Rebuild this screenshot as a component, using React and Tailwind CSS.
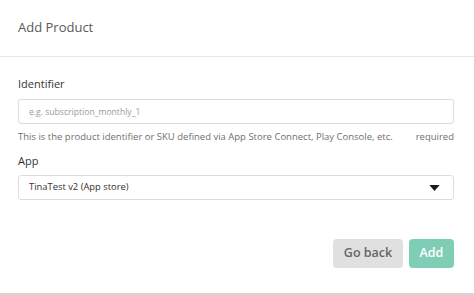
import React from "react";

export default function App() {
  return (
    <div
      className="flex h-[295px] w-[474px] flex-col bg-white"
      style={{ fontFamily: '"Open Sans", sans-serif' }}
    >
      <div className="flex h-[57px] items-center border-b border-[#e6e6e6] pl-[18px]">
        <h1 className="text-[13px] text-[#595959]">Add Product</h1>
      </div>

      <main className="flex flex-1 flex-col pl-[18px] pr-[20px] pt-[18px]">
        <label className="text-[11px] leading-[18px] text-[#333]">Identifier</label>
        <input
          type="text"
          placeholder="e.g. subscription_monthly_1"
          className="mt-[6px] h-[25px] w-full rounded-[3px] border border-[#dcdcdc] px-[10px] text-[8.6px] text-[#333] outline-none placeholder:text-[#9a9a9a]"
        />
        <div className="mt-[5px] flex justify-between whitespace-nowrap text-[9.5px] leading-[16px] text-[#6f6f6f]">
          <span>This is the product identifier or SKU defined via App Store Connect, Play Console, etc.</span>
          <span>required</span>
        </div>

        <label className="mt-[7px] text-[11px] leading-[18px] text-[#333]">App</label>
        <div className="mt-[5px] flex h-[25px] items-center justify-between rounded-[3px] border border-[#dcdcdc] pl-[10px] pr-[13px] text-[9.4px] text-[#333]">
          <span>TinaTest v2 (App store)</span>
          <svg width="11" height="6" viewBox="0 0 12 7">
            <path d="M0 0h12L6 7z" fill="#1a1a1a" />
          </svg>
        </div>

        <div className="mt-[39px] flex justify-end gap-[6px]">
          <button
            type="button"
            className="h-[29px] w-[70px] rounded-[4px] bg-[#e0e0e0] text-[12.5px] font-semibold text-[#666]"
          >
            Go back
          </button>
          <button
            type="button"
            className="h-[29px] w-[45px] rounded-[4px] bg-[#80cdb6] text-[12.5px] font-semibold text-white"
          >
            Add
          </button>
        </div>
      </main>

      <div className="h-[2px] bg-[#d6d6d6]" />
    </div>
  );
}
